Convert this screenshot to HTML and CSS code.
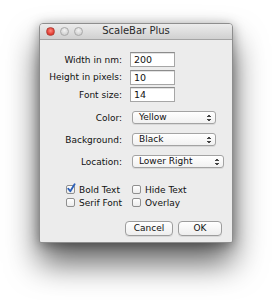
FILE: index.html
```html
<!DOCTYPE html>
<html>
<head>
    <title>ScaleBar Plus</title>
    <link rel="stylesheet" href="styles.css">
</head>
<body>
    <div class="window">
        <div class="titlebar">
            <div class="lights">
                <span class="light close"></span>
                <span class="light"></span>
                <span class="light"></span>
            </div>
            <div class="title">ScaleBar Plus</div>
        </div>
        <div class="content">
            <div class="fields">
                <label>Width in nm:</label>
                <div class="field">200</div>
                <label>Height in pixels:</label>
                <div class="field">10</div>
                <label>Font size:</label>
                <div class="field">14</div>
            </div>
            <div class="selects">
                <label>Color:</label>
                <div class="select">Yellow<span class="arrows"></span></div>
                <label>Background:</label>
                <div class="select">Black<span class="arrows"></span></div>
                <label>Location:</label>
                <div class="select wide">Lower Right<span class="arrows"></span></div>
            </div>
            <div class="checks">
                <div class="check"><span class="box checked">
                    <svg width="11" height="11" viewBox="0 0 11 11"><path d="M2.2 5.6 L4.3 8.2 L8.6 1.2" fill="none" stroke="#2a5fb8" stroke-width="1.8" stroke-linecap="round" stroke-linejoin="round"/></svg>
                </span>Bold Text</div>
                <div class="check"><span class="box"></span>Hide Text</div>
                <div class="check"><span class="box"></span>Serif Font</div>
                <div class="check"><span class="box"></span>Overlay</div>
            </div>
            <div class="buttons">
                <div class="button cancel">Cancel</div>
                <div class="button ok">OK</div>
            </div>
        </div>
    </div>
</body>
</html>
```

FILE: styles.css
```css
html {
    background: #ffffff;
}
body {
    margin: 0;
    min-height: 300px;
    box-sizing: border-box;
    padding: 23px 0 0 39px;
    font-family: 'DejaVu Sans', sans-serif;
    font-size: 9px;
    color: #111;
}
.window {
    width: 194px;
    height: 220px;
    box-sizing: border-box;
    background: #ececec;
    border: 1px solid #8e8e8e;
    border-radius: 4px 4px 2px 2px;
    box-shadow: 0 20px 32px rgba(0, 0, 0, 0.62), 0 2px 12px rgba(0, 0, 0, 0.35);
    display: flex;
    flex-direction: column;
}
.titlebar {
    height: 15px;
    background: linear-gradient(to bottom, #ececec, #d0d0d0);
    border-bottom: 1px solid #a4a4a4;
    border-radius: 3px 3px 0 0;
    display: flex;
    align-items: center;
    position: relative;
}
.lights {
    display: flex;
    gap: 5px;
    padding-left: 6px;
}
.light {
    width: 9px;
    height: 9px;
    border-radius: 50%;
    box-sizing: border-box;
    border: 1px solid #a9a9a9;
    background: radial-gradient(circle at 50% 35%, #f2f2f2, #c6c6c6);
}
.light.close {
    border-color: #b0443c;
    background: radial-gradient(circle at 50% 40%, #ff8b80, #e0352b 70%);
}
.title {
    position: absolute;
    left: 0;
    right: 0;
    top: 1px;
    text-align: center;
    font-size: 10px;
    color: #2a2a2a;
}
.content {
    flex: 1;
    display: flex;
    flex-direction: column;
}
.fields, .selects {
    display: grid;
    grid-template-columns: 82px auto;
    column-gap: 8px;
    align-items: center;
}
label {
    text-align: right;
    white-space: nowrap;
}
.fields {
    margin-top: 12px;
    grid-auto-rows: 15px;
    row-gap: 2.5px;
}
.field {
    width: 45px;
    height: 15px;
    box-sizing: border-box;
    background: #fff;
    border: 1px solid #a6a6a6;
    border-top-color: #8c8c8c;
    box-shadow: inset 0 1px 0 #e2e2e2;
    padding: 1px 0 0 3px;
    line-height: 12px;
    font-size: 9.5px;
}
.selects {
    margin-top: 9px;
    grid-auto-rows: 13px;
    row-gap: 9px;
}
.select {
    margin-left: 2px;
    width: 84px;
    height: 13px;
    box-sizing: border-box;
    border: 1px solid #a3a3a3;
    border-radius: 3px;
    background: linear-gradient(to bottom, #ffffff, #f1f1f1);
    box-shadow: 0 1px 0 rgba(0, 0, 0, 0.08);
    padding-left: 6px;
    line-height: 11px;
    display: flex;
    align-items: center;
    justify-content: space-between;
}
.select.wide {
    width: 92px;
}
.arrows {
    width: 4px;
    height: 8px;
    margin-right: 4px;
    background:
        linear-gradient(to bottom right, transparent 50%, #444 50%) 0 0 / 2px 3px no-repeat,
        linear-gradient(to bottom left, transparent 50%, #444 50%) 2px 0 / 2px 3px no-repeat,
        linear-gradient(to top right, transparent 50%, #444 50%) 0 5px / 2px 3px no-repeat,
        linear-gradient(to top left, transparent 50%, #444 50%) 2px 5px / 2px 3px no-repeat;
}
.checks {
    margin-top: 15px;
    padding-left: 26px;
    display: grid;
    grid-template-columns: 66px auto;
    grid-auto-rows: 13px;
}
.check {
    display: flex;
    align-items: center;
    gap: 4px;
    white-space: nowrap;
}
.box {
    width: 9px;
    height: 9px;
    box-sizing: border-box;
    border: 1px solid #8f8f8f;
    border-radius: 2px;
    background: linear-gradient(to bottom, #ffffff, #ececec);
    position: relative;
    flex: none;
}
.box svg {
    position: absolute;
    left: -1px;
    top: -3px;
}
.buttons {
    margin-top: auto;
    margin-bottom: 6px;
    padding-right: 10px;
    display: flex;
    justify-content: flex-end;
    gap: 5px;
}
.button {
    height: 15px;
    box-sizing: border-box;
    border: 1px solid #9d9d9d;
    border-radius: 4px;
    background: linear-gradient(to bottom, #ffffff, #eeeeee);
    box-shadow: 0 1px 0 rgba(0, 0, 0, 0.08);
    text-align: center;
    line-height: 13px;
}
.button.cancel {
    width: 48px;
}
.button.ok {
    width: 44px;
}
```
